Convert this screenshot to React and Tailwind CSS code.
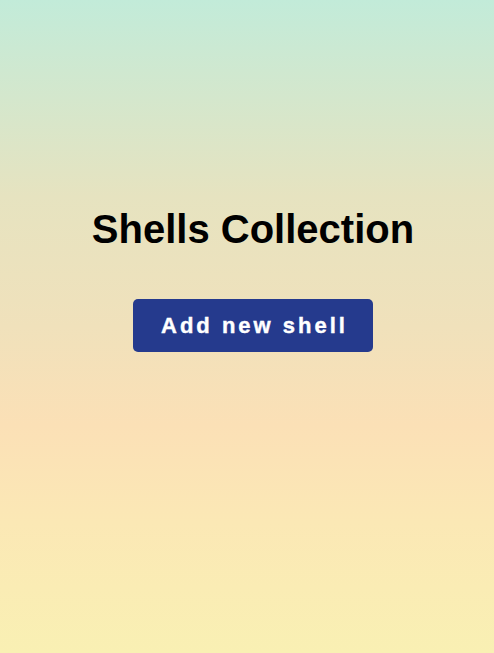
import React from 'react';

const App = () => {
  return (
    <div
      className="min-h-screen w-full pl-[12px] flex flex-col items-center bg-[linear-gradient(to_bottom,#c2ebd9_0%,#e6e3c0_30%,#f0e1bb_50%,#fbe0b6_65%,#fbe8b5_80%,#f9f0b3_100%)]"
      style={{ fontFamily: '"Liberation Sans", Arial, sans-serif' }}
    >
      <h1 className="mt-[205px] text-[40px] leading-[48px] font-bold text-black">
        Shells Collection
      </h1>
      <button className="mt-[46px] w-[240px] h-[53px] rounded-[5px] bg-[#253a8d] text-white text-[22px] font-black tracking-[3px] flex items-center justify-center pl-[3px] [-webkit-text-stroke:0.4px_white]">
        Add new shell
      </button>
    </div>
  );
};

export default App;
